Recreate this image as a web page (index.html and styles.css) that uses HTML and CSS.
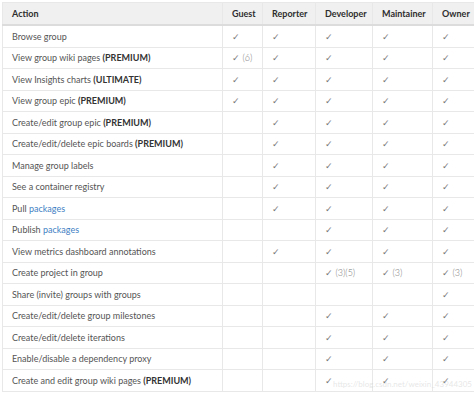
FILE: index.html
```html
<!DOCTYPE html>
<html lang="en">
<head>
    <meta charset="UTF-8">
    <meta name="viewport" content="width=device-width, initial-scale=1.0">
    <title>Group permissions</title>
    <link rel="stylesheet" href="styles.css">
</head>
<body>
    <div class="wrap">
        <table class="perms">
            <colgroup>
                <col class="c-action">
                <col class="c-guest">
                <col class="c-reporter">
                <col class="c-developer">
                <col class="c-maintainer">
                <col class="c-owner">
            </colgroup>
            <thead>
                <tr>
                    <th>Action</th>
                    <th>Guest</th>
                    <th>Reporter</th>
                    <th>Developer</th>
                    <th>Maintainer</th>
                    <th>Owner</th>
                </tr>
            </thead>
            <tbody>
                <tr><td>Browse group</td><td>✓</td><td>✓</td><td>✓</td><td>✓</td><td>✓</td></tr>
                <tr><td>View group wiki pages <b>(PREMIUM)</b></td><td>✓ (6)</td><td>✓</td><td>✓</td><td>✓</td><td>✓</td></tr>
                <tr><td>View Insights charts <b>(ULTIMATE)</b></td><td>✓</td><td>✓</td><td>✓</td><td>✓</td><td>✓</td></tr>
                <tr><td>View group epic <b>(PREMIUM)</b></td><td>✓</td><td>✓</td><td>✓</td><td>✓</td><td>✓</td></tr>
                <tr><td>Create/edit group epic <b>(PREMIUM)</b></td><td></td><td>✓</td><td>✓</td><td>✓</td><td>✓</td></tr>
                <tr><td>Create/edit/delete epic boards <b>(PREMIUM)</b></td><td></td><td>✓</td><td>✓</td><td>✓</td><td>✓</td></tr>
                <tr><td>Manage group labels</td><td></td><td>✓</td><td>✓</td><td>✓</td><td>✓</td></tr>
                <tr><td>See a container registry</td><td></td><td>✓</td><td>✓</td><td>✓</td><td>✓</td></tr>
                <tr><td>Pull <a href="#">packages</a></td><td></td><td>✓</td><td>✓</td><td>✓</td><td>✓</td></tr>
                <tr><td>Publish <a href="#">packages</a></td><td></td><td></td><td>✓</td><td>✓</td><td>✓</td></tr>
                <tr><td>View metrics dashboard annotations</td><td></td><td>✓</td><td>✓</td><td>✓</td><td>✓</td></tr>
                <tr><td>Create project in group</td><td></td><td></td><td>✓ (3)(5)</td><td>✓ (3)</td><td>✓ (3)</td></tr>
                <tr><td>Share (invite) groups with groups</td><td></td><td></td><td></td><td></td><td>✓</td></tr>
                <tr><td>Create/edit/delete group milestones</td><td></td><td></td><td>✓</td><td>✓</td><td>✓</td></tr>
                <tr><td>Create/edit/delete iterations</td><td></td><td></td><td>✓</td><td>✓</td><td>✓</td></tr>
                <tr><td>Enable/disable a dependency proxy</td><td></td><td></td><td>✓</td><td>✓</td><td>✓</td></tr>
                <tr><td>Create and edit group wiki pages <b>(PREMIUM)</b></td><td></td><td></td><td>✓</td><td>✓</td><td>✓</td></tr>
            </tbody>
        </table>
        <div class="watermark">https://blog.csdn.net/weixin_43944305</div>
    </div>
</body>
</html>
```

FILE: styles.css
```css
body {
    margin: 2px 0 0 2px;
    background-color: #fff;
    font-family: Lato, "Open Sans", Arial, sans-serif;
    overflow: hidden;
}
.wrap {
    position: relative;
    width: 476px;
}
.perms {
    border-collapse: collapse;
    table-layout: fixed;
    width: 476px;
    font-size: 9px;
    color: #555;
}
.c-action { width: 220px; }
.c-guest { width: 40px; }
.c-reporter { width: 53px; }
.c-developer { width: 57px; }
.c-maintainer { width: 60px; }
.c-owner { width: 46px; }
.perms th {
    background-color: #f0f0f0;
    color: #2e2e2e;
    font-weight: 700;
    text-align: left;
    height: 21px;
    padding: 0 0 0 9px;
    border: 1px solid #e8e8e8;
    border-bottom: 2px solid #dcdcdc;
    white-space: nowrap;
}
.perms td {
    height: 20.5px;
    padding: 0 0 0 9px;
    border: 1px solid #e8e8e8;
    white-space: nowrap;
}
.perms td:not(:first-child) {
    color: #777;
    font-family: Lato, "DejaVu Sans", sans-serif;
    font-weight: 300;
}
.perms b {
    color: #333;
}
.perms a {
    color: #3f7fc4;
    text-decoration: none;
}
.watermark {
    position: absolute;
    right: 6px;
    bottom: 3px;
    font-size: 8px;
    color: rgba(210, 210, 210, 0.55);
}
```
